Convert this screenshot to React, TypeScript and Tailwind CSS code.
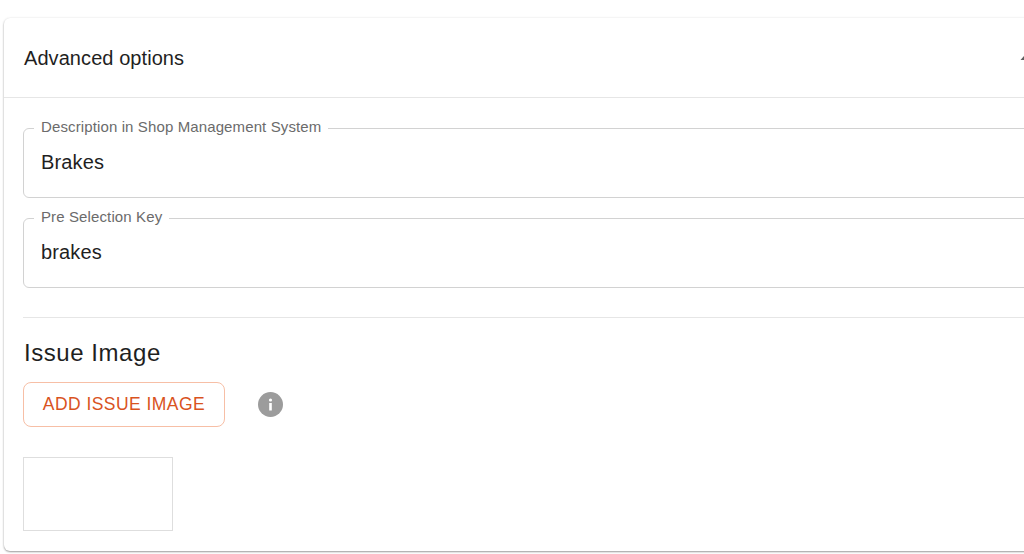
export default function App() {
  return (
    <div className="h-[554px] w-[1024px] overflow-hidden bg-white pt-[18px] pl-[4px] font-['Liberation_Sans',Arial,sans-serif] text-[#1f1f1f]">
      <div className="h-[533px] w-[1060px] rounded-[6px] bg-white shadow-[0_1px_2px_rgba(0,0,0,0.38),0_0_3px_rgba(0,0,0,0.06)]">
        <div className="relative flex h-[80px] items-center border-b border-[#e6e6e6] pl-[20px]">
          <span className="text-[20px] leading-[28px] tracking-[0.07px]">Advanced options</span>
          <svg className="absolute top-[34px] left-[1015px] h-[12px] w-[12px]" viewBox="0 0 12 12">
            <path d="M6 3 1.5 8h9z" fill="#5f5f5f" />
          </svg>
        </div>
        <div className="pt-[22px] pl-[19px]">
          <Field label="Description in Shop Management System" value="Brakes" />
          <div className="h-[12px]" />
          <Field label="Pre Selection Key" value="brakes" />
          <div className="mt-[29px] border-t border-[#e6e6e6] pt-[20px]">
            <h2 className="pl-[1px] text-[24px] leading-[30px] font-normal tracking-[0.55px]">Issue Image</h2>
            <div className="mt-[14px] flex items-center">
              <button className="h-[45px] w-[202px] rounded-[8px] border border-[#f7bfa6] bg-white text-[17.5px] tracking-[0.45px] text-[#d9531e]">
                ADD ISSUE IMAGE
              </button>
              <svg className="ml-[33px] h-[25px] w-[25px]" viewBox="0 0 25 25">
                <circle cx="12.5" cy="12.5" r="12.5" fill="#9c9c9c" />
                <rect x="11.2" y="11" width="2.6" height="7.5" fill="#fff" />
                <circle cx="12.5" cy="8" r="1.6" fill="#fff" />
              </svg>
            </div>
            <div className="mt-[30px] h-[74px] w-[150px] border border-[#dedede]" />
          </div>
        </div>
      </div>
    </div>
  );
}

function Field({ label, value }: { label: string; value: string }) {
  return (
    <fieldset className="h-[78px] w-[1060px] rounded-[6px] border border-[#d2d2d2] pl-[10px]">
      <legend className="px-[7px] text-[15px] leading-[16px] tracking-[0.12px] text-[#6b6b6b]">
        <span className="inline-block -translate-y-px">{label}</span>
      </legend>
      <div className="pt-[12px] pl-[7px] text-[20px] leading-[28px] tracking-[0.15px]">{value}</div>
    </fieldset>
  );
}
